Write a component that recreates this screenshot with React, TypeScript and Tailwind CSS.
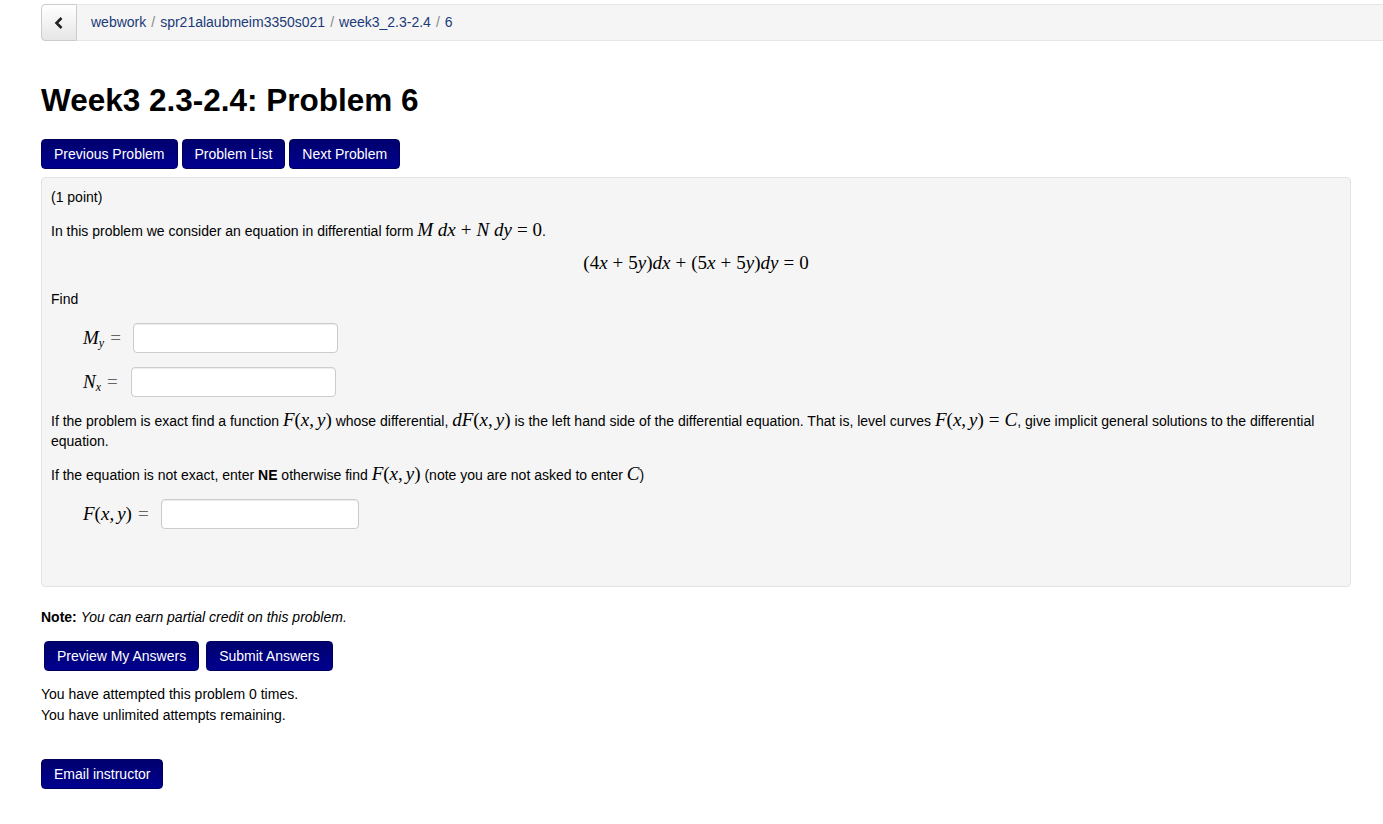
import React from "react";

const V: React.FC<{ children: React.ReactNode }> = ({ children }) => (
  <span className="italic">{children}</span>
);

const Op: React.FC<{ children: React.ReactNode }> = ({ children }) => (
  <span className="mx-[5px]">{children}</span>
);

const Math: React.FC<{ children: React.ReactNode; className?: string }> = ({ children, className }) => (
  <span className={`font-['Liberation_Serif',serif] text-[19px] leading-[14px] text-black ${className ?? ""}`}>
    {children}
  </span>
);

const Fxy = () => (
  <>
    <V>F</V>(<V>x</V>,<span className="ml-[3px]"><V>y</V></span>)
  </>
);

const NavyButton: React.FC<{ children: React.ReactNode; className?: string }> = ({ children, className }) => (
  <button
    className={`h-[30px] rounded-[4px] border border-[#00005a] bg-gradient-to-b from-[#00006e] to-[#00008f] px-[12px] text-[14px] text-white ${className ?? ""}`}
  >
    {children}
  </button>
);

const Field: React.FC<{ w: string }> = ({ w }) => (
  <input
    className={`h-[30px] ${w} rounded-[4px] border border-[#cccccc] bg-white shadow-[inset_0_1px_1px_rgba(0,0,0,0.075)]`}
  />
);

export default function App() {
  return (
    <div className="min-h-screen bg-white font-['Liberation_Sans',Arial,sans-serif] text-[14px] text-[#000]">
      {/* breadcrumb */}
      <div className="flex pl-[41px] pt-[4px]">
        <button className="flex h-[37px] w-[36px] items-center justify-center rounded-l-[4px] border border-[#cccccc] bg-gradient-to-b from-white to-[#e6e6e6]">
          <svg width="10" height="14" viewBox="0 0 10 14">
            <path d="M7.5 2 L2.5 7 L7.5 12" fill="none" stroke="#222" strokeWidth="2.6" />
          </svg>
        </button>
        <div className="flex h-[37px] flex-1 items-center border-y border-[#e6e6e6] bg-[#f5f5f5] pl-[14px] text-[14px] text-[#1b3a78]">
          <span>webwork</span>
          <span className="mx-[5px] text-[#888]">/</span>
          <span>spr21alaubmeim3350s021</span>
          <span className="mx-[5px] text-[#888]">/</span>
          <span>week3_2.3-2.4</span>
          <span className="mx-[5px] text-[#888]">/</span>
          <span>6</span>
        </div>
      </div>

      <div className="px-[41px]">
        <h1 className="mt-[40px] text-[31.5px] font-bold leading-[38px]">Week3 2.3-2.4: Problem 6</h1>

        <div className="mt-[20px] flex gap-[4px]">
          <NavyButton>Previous Problem</NavyButton>
          <NavyButton>Problem List</NavyButton>
          <NavyButton>Next Problem</NavyButton>
        </div>

        <div className="mt-[8px] h-[410px] w-[1310px] rounded-[4px] border border-[#e3e3e3] bg-[#f5f5f5] px-[9px] pt-[9px]">
          <p className="leading-[20px]">(1 point)</p>
          <p className="mt-[14px] leading-[20px]">
            In this problem we consider an equation in differential form{" "}
            <Math>
              <V>M</V> <V>dx</V>
              <Op>+</Op>
              <V>N</V> <V>dy</V>
              <Op>=</Op>0
            </Math>
            .
          </p>
          <div className="mt-[13px] text-center leading-[20px]">
            <Math>
              (4<V>x</V>
              <Op>+</Op>5<V>y</V>)<V>dx</V>
              <Op>+</Op>(5<V>x</V>
              <Op>+</Op>5<V>y</V>)<V>dy</V>
              <Op>=</Op>0
            </Math>
          </div>
          <p className="mt-[15px] leading-[20px]">Find</p>

          <div className="mt-[14px] flex items-center pl-[32px]">
            <Math className="w-[50px]">
              <V>M</V>
              <sub className="text-[12px] italic">y</sub>
              <span className="ml-[6px] text-[#666]">=</span>
            </Math>
            <Field w="w-[205px]" />
          </div>
          <div className="mt-[14px] flex items-center pl-[32px]">
            <Math className="w-[48px]">
              <V>N</V>
              <sub className="text-[12px] italic">x</sub>
              <span className="ml-[6px] text-[#666]">=</span>
            </Math>
            <Field w="w-[205px]" />
          </div>

          <p className="mt-[14px] pr-[10px] leading-[20px]">
            If the problem is exact find a function{" "}
            <Math>
              <Fxy />
            </Math>{" "}
            whose differential,{" "}
            <Math>
              <V>dF</V>(<V>x</V>,<span className="ml-[3px]"><V>y</V></span>)
            </Math>{" "}
            is the left hand side of the differential equation. That is, level curves{" "}
            <Math>
              <Fxy />
              <Op>=</Op>
              <V>C</V>
            </Math>
            , give implicit general solutions to the differential equation.
          </p>

          <p className="mt-[14px] leading-[20px]">
            If the equation is not exact, enter <b>NE</b> otherwise find{" "}
            <Math>
              <Fxy />
            </Math>{" "}
            (note you are not asked to enter{" "}
            <Math>
              <V>C</V>
            </Math>
            )
          </p>

          <div className="mt-[14px] flex items-center pl-[32px]">
            <Math className="w-[78px]">
              <Fxy />
              <span className="ml-[6px] text-[#666]">=</span>
            </Math>
            <Field w="w-[198px]" />
          </div>
        </div>

        <p className="mt-[20px] leading-[20px]">
          <b>Note:</b> <i>You can earn partial credit on this problem.</i>
        </p>

        <div className="mt-[14px] flex gap-[7px] pl-[3px]">
          <NavyButton>Preview My Answers</NavyButton>
          <NavyButton>Submit Answers</NavyButton>
        </div>

        <div className="mt-[13px] leading-[21px]">
          <p>You have attempted this problem 0 times.</p>
          <p>You have unlimited attempts remaining.</p>
        </div>

        <div className="mt-[33px]">
          <NavyButton>Email instructor</NavyButton>
        </div>
      </div>
    </div>
  );
}
